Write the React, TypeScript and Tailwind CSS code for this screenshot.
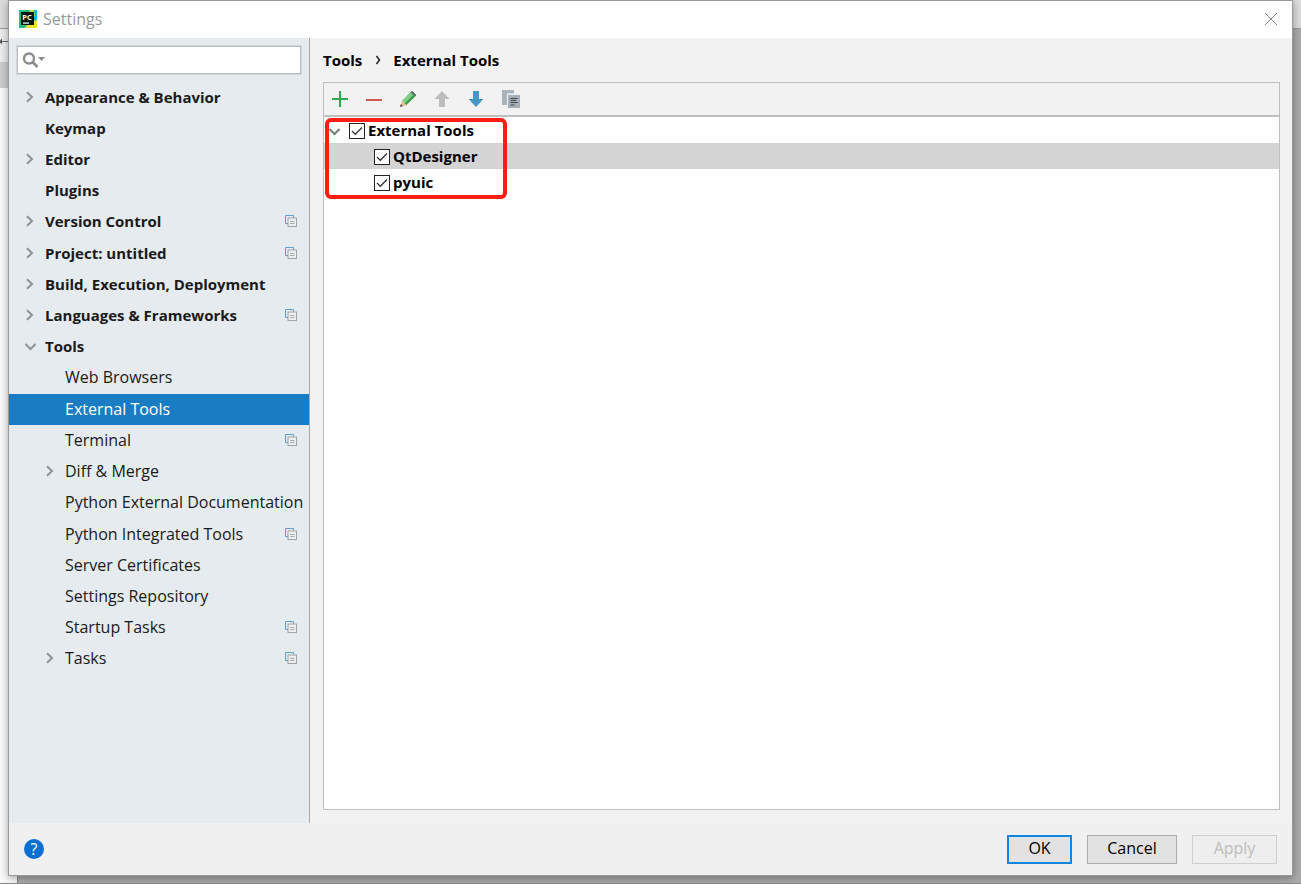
import React, { useState } from 'react';
import clsx from 'clsx';

interface NavItem {
  label: string;
  level: 0 | 1;
  state?: 'open' | 'closed';
  shared?: boolean;
}

interface ToolEntry {
  id: string;
  name: string;
  enabled: boolean;
}

const navItems: NavItem[] = [
  { label: 'Appearance & Behavior', level: 0, state: 'closed' },
  { label: 'Keymap', level: 0 },
  { label: 'Editor', level: 0, state: 'closed' },
  { label: 'Plugins', level: 0 },
  { label: 'Version Control', level: 0, state: 'closed', shared: true },
  { label: 'Project: untitled', level: 0, state: 'closed', shared: true },
  { label: 'Build, Execution, Deployment', level: 0, state: 'closed' },
  { label: 'Languages & Frameworks', level: 0, state: 'closed', shared: true },
  { label: 'Tools', level: 0, state: 'open' },
  { label: 'Web Browsers', level: 1 },
  { label: 'External Tools', level: 1 },
  { label: 'Terminal', level: 1, shared: true },
  { label: 'Diff & Merge', level: 1, state: 'closed' },
  { label: 'Python External Documentation', level: 1 },
  { label: 'Python Integrated Tools', level: 1, shared: true },
  { label: 'Server Certificates', level: 1 },
  { label: 'Settings Repository', level: 1 },
  { label: 'Startup Tasks', level: 1, shared: true },
  { label: 'Tasks', level: 1, state: 'closed', shared: true },
];

function Chevron({ open, className }: { open: boolean; className?: string }) {
  return (
    <svg viewBox="0 0 12 12" className={clsx('w-3 h-3 shrink-0', className)} fill="none" stroke="currentColor" strokeWidth="2">
      <path d={open ? 'M1.5 4 L6.5 9 L11.5 4' : 'M3 1.2 L8 6 L3 10.8'} />
    </svg>
  );
}

function SharedIcon() {
  return (
    <svg viewBox="0 0 12 12" className="w-3 h-3 shrink-0" fill="none">
      <path d="M3 8.5 H0.5 V0.5 H8.5 V2.5" stroke="#5e9fc6" />
      <rect x="3" y="3" width="8.5" height="8.5" fill="#eceff1" stroke="#a0a4a7" />
      <path d="M5 6.5 H9.5 M5 8.5 H9.5" stroke="#a9adb0" />
    </svg>
  );
}

function AppLogo() {
  return (
    <svg viewBox="0 0 18 18" className="w-[18px] h-[18px]">
      <rect width="18" height="18" fill="#21c07d" />
      <path d="M14 0 H18 V11 L14 7 Z" fill="#12b5e5" />
      <path d="M10 0 H15 L16 6 L13 8 Z" fill="#b9dc55" />
      <path d="M18 10 V18 H6 L9 14 H14 L15 11 Z" fill="#e9e338" />
      <rect x="2" y="2" width="13" height="13" fill="#0d1512" />
      <rect x="4" y="12.5" width="6" height="1.2" fill="#fff" />
      <text x="3.2" y="9.6" fill="#fff" fontSize="7.5" fontWeight="700" fontFamily="Open Sans, sans-serif">PC</text>
    </svg>
  );
}

function PlusIcon() {
  return (
    <svg viewBox="0 0 16 16" className="w-4 h-4">
      <path d="M8 0 V16 M0 8 H16" stroke="#2fa84f" strokeWidth="2" />
    </svg>
  );
}

function MinusIcon() {
  return (
    <svg viewBox="0 0 16 16" className="w-4 h-4">
      <path d="M0 9 H16" stroke="#d4584f" strokeWidth="2" />
    </svg>
  );
}

function PencilIcon() {
  return (
    <svg viewBox="0 0 16 16" className="w-4 h-4">
      <path d="M2 10 L11 1 L15.4 5.2 L6.2 14.2 Z" fill="#3f9c4d" />
      <path d="M2 10 L11 1 L13.6 3.6 L4.6 12.6 Z" fill="#7fd188" />
      <path d="M10.4 1.6 L12 0 L16 4 L14.8 5.8 Z" fill="#5f8f6b" />
      <path d="M12 0 L16 4 L15.6 5 L11.2 0.8 Z" fill="#4b5a50" />
      <path d="M2 10 L6.2 14.2 L0 16 Z" fill="#edc08c" />
      <path d="M0.9 13 L3 15.1 L0 16 Z" fill="#4a4a4a" />
    </svg>
  );
}

function ArrowIcon({ down }: { down?: boolean }) {
  return (
    <svg viewBox="0 0 16 16" className="w-4 h-4">
      {down ? (
        <path d="M5 0 H11 V8 H15.5 L8 16 L0.5 8 H5 Z" fill="#4595c6" />
      ) : (
        <path d="M8 0 L15.5 8 H11 V16 H5 V8 H0.5 Z" fill="#bdbdbd" />
      )}
    </svg>
  );
}

function CopyIcon() {
  return (
    <svg viewBox="0 0 18 18" className="w-[18px] h-[18px]">
      <path d="M0 0 H12 V3.5 H5 V15 H0 Z" fill="#a9b5bd" />
      <rect x="6" y="5" width="12" height="13" fill="#a3b0b9" />
      <path d="M8.5 8.5 H15.5 M8.5 10.5 H14 M8.5 12.5 H15.5 M8.5 15 H12.5" stroke="#43484b" />
    </svg>
  );
}

const toolbarActions = [
  { label: 'Add', icon: <PlusIcon /> },
  { label: 'Remove', icon: <MinusIcon /> },
  { label: 'Edit', icon: <PencilIcon /> },
  { label: 'Move Up', icon: <ArrowIcon />, disabled: true },
  { label: 'Move Down', icon: <ArrowIcon down /> },
  { label: 'Copy', icon: <CopyIcon /> },
];

function TreeCheckbox({ label, checked, onChange }: { label: string; checked: boolean; onChange: () => void }) {
  return (
    <label className="flex items-center gap-[3px] text-[15px] font-bold text-black">
      <span className="relative w-4 h-4">
        <input
          type="checkbox"
          checked={checked}
          onChange={onChange}
          className="block w-4 h-4 appearance-none border border-[#222] bg-white"
        />
        {checked && (
          <svg viewBox="0 0 16 16" className="absolute inset-0 w-4 h-4 pointer-events-none" fill="none" stroke="#333" strokeWidth="1.3">
            <path d="M3 8 L6.3 11.3 L13 4.5" />
          </svg>
        )}
      </span>
      <span className="pb-0.5">{label}</span>
    </label>
  );
}

function Sidebar({ selected, onSelect }: { selected: string; onSelect: (label: string) => void }) {
  const [query, setQuery] = useState('');

  return (
    <aside className="w-[301px] shrink-0 bg-[#e5ebef] border-r border-[#a8a8a8]">
      <div className="mx-2 mt-2 flex items-center h-7 border border-[#b9bdc0] ring-1 ring-[#d3d8dc] bg-white pl-1">
        <svg viewBox="0 0 24 16" className="w-6 h-4 shrink-0" fill="none">
          <circle cx="7" cy="6.5" r="5" stroke="#8c8c8c" strokeWidth="2.4" />
          <path d="M10.5 10 L15.5 15" stroke="#8c8c8c" strokeWidth="2.8" />
          <path d="M16 5 H23 L19.5 9 Z" fill="#8c8c8c" />
        </svg>
        <input
          type="text"
          aria-label="Search settings"
          value={query}
          onChange={e => setQuery(e.target.value)}
          className="flex-1 min-w-0 outline-none bg-transparent"
        />
      </div>
      <ul className="mt-2 h-[593px] grid grid-cols-1 auto-rows-fr">
        {navItems.map(item => (
          <li key={item.label} className="flex min-w-0">
            <button
              onClick={() => onSelect(item.label)}
              className={clsx(
                'w-full min-w-0 flex items-center text-left pr-3 pb-[2px]',
                item.level === 0 ? 'pl-[15px] font-bold text-[15px]' : 'pl-[35px]',
                item.label === selected ? 'bg-[#1a7dc4] text-white' : 'text-[#1a1a1a]'
              )}
            >
              <span className="w-[21px] shrink-0 text-[#909396]">
                {item.state && <Chevron open={item.state === 'open'} />}
              </span>
              <span className="flex-1 min-w-0 whitespace-nowrap">{item.label}</span>
              {item.shared && <SharedIcon />}
            </button>
          </li>
        ))}
      </ul>
    </aside>
  );
}

function ToolsPanel() {
  const [tools, setTools] = useState<ToolEntry[]>([
    { id: 'qt', name: 'QtDesigner', enabled: true },
    { id: 'pyuic', name: 'pyuic', enabled: true },
  ]);

  const allEnabled = tools.every(tool => tool.enabled);

  const toggleAll = () => setTools(tools.map(tool => ({ ...tool, enabled: !allEnabled })));

  const toggleTool = (id: string) => {
    setTools(tools.map(tool => (tool.id === id ? { ...tool, enabled: !tool.enabled } : tool)));
  };

  return (
    <main className="flex-1 min-w-0 flex flex-col bg-[#f2f2f2] pl-[13px] pr-3 pb-[13px]">
      <h1 className="h-11 flex items-center text-[15px] font-bold text-black">
        Tools
        <svg viewBox="0 0 6 10" className="w-[6px] h-[10px] ml-[13px] mr-3" fill="none" stroke="#222" strokeWidth="1.5">
          <path d="M1.5 1 L4.5 5 L1.5 9" />
        </svg>
        External Tools
      </h1>
      <section className="flex-1 flex flex-col border border-[#bfbfbf] bg-white">
        <div className="h-[34px] flex items-center gap-[18px] pl-2 bg-[#f2f2f2] border-b-2 border-[#bfbfbf]">
          {toolbarActions.map(action => (
            <button key={action.label} aria-label={action.label} disabled={action.disabled}>
              {action.icon}
            </button>
          ))}
        </div>
        <div className="relative">
          <div className="h-[26px] flex items-center pl-1 pt-[2px]">
            <Chevron open className="text-[#7a7a7a] mr-[9px]" />
            <TreeCheckbox label="External Tools" checked={allEnabled} onChange={toggleAll} />
          </div>
          {tools.map((tool, index) => (
            <div key={tool.id} className={clsx('h-[26px] flex items-center pl-[50px] pt-[2px]', index === 0 && 'bg-[#d4d4d4]')}>
              <TreeCheckbox label={tool.name} checked={tool.enabled} onChange={() => toggleTool(tool.id)} />
            </div>
          ))}
          <div className="absolute left-px top-px w-[182px] h-[81px] border-4 border-[#fe1e14] rounded-md pointer-events-none" />
        </div>
      </section>
    </main>
  );
}

export default function App() {
  const [selected, setSelected] = useState('External Tools');

  return (
    <div className="relative min-h-screen flex bg-[#ababab] font-['Open_Sans','Noto_Sans',sans-serif] text-[16px] leading-6">
      {/* editor window visible behind the dialog */}
      <div className="absolute inset-0 flex flex-col border-b border-[#8a8a8a]">
        <div className="h-[29px] bg-[#dcdcdc] border-b border-[#9a9a9a]" />
        <div className="flex-1 w-[18px] bg-[#fafafa] border-r border-[#888]">
          <div className="h-[33px] bg-[#ededed] pt-2">
            <svg viewBox="0 0 8 9" className="w-2 h-[9px]">
              <path d="M0 4.5 H8" stroke="#666" />
              <path d="M-1 4.5 L2 1.5 V7.5 Z" fill="#555" />
            </svg>
          </div>
          <div className="h-[26px] bg-[#cccccc]" />
        </div>
      </div>

      <div className="relative flex-1 min-w-0 flex flex-col mx-2 mb-2 border border-[#999] bg-[#f0f0f0] shadow-[0_2px_8px_rgba(0,0,0,0.35)]">
        <header className="h-[37px] flex items-center bg-white pl-[10px] pr-[14px] pb-px">
          <AppLogo />
          <span className="ml-[6px] flex-1 text-[#999]">Settings</span>
          <button aria-label="Close">
            <svg viewBox="0 0 14 14" className="w-[14px] h-[14px]" stroke="#888">
              <path d="M1 1 L13 13 M13 1 L1 13" />
            </svg>
          </button>
        </header>

        <div className="flex-1 flex">
          <Sidebar selected={selected} onSelect={setSelected} />
          <ToolsPanel />
        </div>

        <footer className="h-[52px] flex items-center gap-[15px] pl-[15px] pr-[15px]">
          <button aria-label="Help" className="w-5 h-5 rounded-full bg-[#0a6fd0] text-white leading-5 flex items-center justify-center">
            ?
          </button>
          <div className="flex-1" />
          <button className="w-[65px] h-[29px] pb-0.5 flex items-center justify-center border-2 border-[#0c86e0] bg-[#e2e2e2] text-black">OK</button>
          <button className="w-[90px] h-[29px] pb-0.5 flex items-center justify-center border border-[#adadad] bg-[#e2e2e2] text-black">Cancel</button>
          <button disabled className="w-[85px] h-[29px] pb-0.5 flex items-center justify-center border border-[#cfcfcf] bg-[#eeeeee] text-[#bdbdbd]">Apply</button>
        </footer>
      </div>
    </div>
  );
}
